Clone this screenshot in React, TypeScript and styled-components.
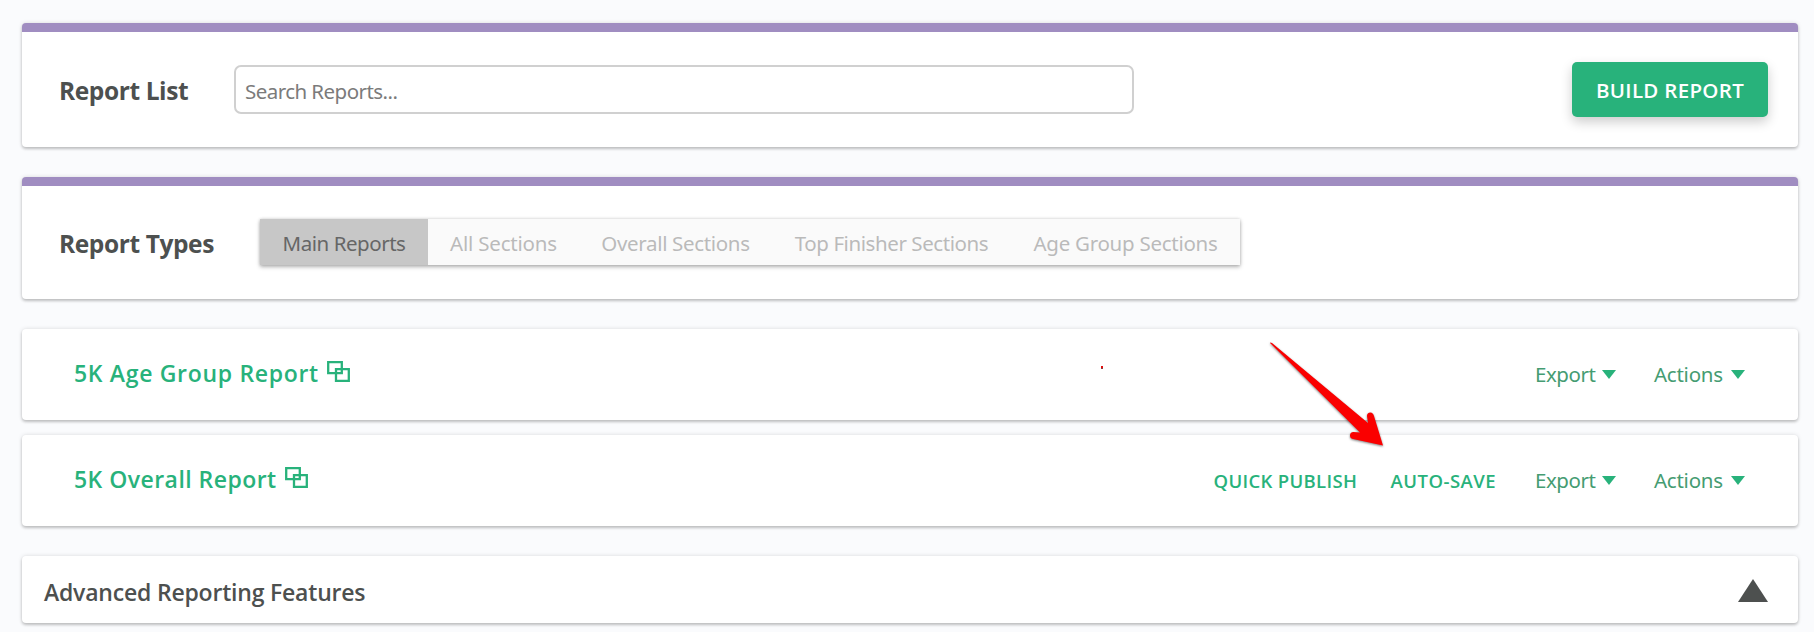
import React from "react";
import styled, { createGlobalStyle } from "styled-components";

const green = "#28b27b";
const ink = "#4d504f";
const bodyFont = '"Noto Sans", "Open Sans", sans-serif';
const headingFont = '"Open Sans", "Noto Sans", sans-serif';

const GlobalStyle = createGlobalStyle`
  * { box-sizing: border-box; }
  body {
    margin: 0;
    background: #fafbfd;
    color: ${ink};
    font-family: ${headingFont};
  }
  button, input { font-family: inherit; margin: 0; }
`;

const Page = styled.main`
  position: relative;
  height: 632px;
  padding: 23px 16px 0 22px;
  overflow: hidden;
`;

const Card = styled.section`
  display: flex;
  align-items: center;
  background: #fff;
  border-radius: 4px;
  box-shadow: 0 2px 3px rgba(0, 0, 0, 0.2), 0 0 4px rgba(0, 0, 0, 0.13);
`;

const HeaderCard = styled(Card)<{ $height: number }>`
  height: ${(p) => p.$height}px;
  margin-bottom: 30px;
  padding: 0 30px 0 37px;
  border-top: 9px solid #a08dc1;
`;

const Title = styled.h2<{ $width: number }>`
  flex: none;
  width: ${(p) => p.$width}px;
  margin: 2px 0 0;
  font-size: 24.5px;
  line-height: 36px;
  font-weight: 700;
  letter-spacing: -0.4px;
  white-space: nowrap;
`;

const SearchInput = styled.input`
  width: 900px;
  height: 49px;
  padding: 3px 9px 0;
  border: 2px solid #d0d0d0;
  border-radius: 7px;
  background: #fff;
  color: ${ink};
  font-family: ${bodyFont};
  font-size: 20.5px;
  letter-spacing: -0.55px;
  outline: none;
  &::placeholder { color: #7b7b7b; opacity: 1; }
`;

const BuildButton = styled.button`
  width: 196px;
  height: 55px;
  margin-left: auto;
  padding: 0;
  border: 0;
  border-radius: 5px;
  background: ${green};
  box-shadow: 0 5px 12px rgba(0, 0, 0, 0.2);
  color: #fff;
  font-size: 20.5px;
  font-weight: 600;
  letter-spacing: 0.3px;
`;

const Tabs = styled.div`
  display: flex;
  height: 46px;
  margin-bottom: 1px;
  background: #fafafa;
  box-shadow: 0 2px 4px rgba(0, 0, 0, 0.28), 0 0 3px rgba(0, 0, 0, 0.16);
`;

const Tab = styled.button<{ $active?: boolean; $width: number; $tracking: number }>`
  width: ${(p) => p.$width}px;
  padding: 2px 0 0;
  border: 0;
  background: ${(p) => (p.$active ? "#c7c7c7" : "transparent")};
  color: ${(p) => (p.$active ? "#666" : "#bababa")};
  font-family: ${bodyFont};
  font-size: 20.5px;
  letter-spacing: ${(p) => p.$tracking}px;
  white-space: nowrap;
`;

const ReportList = styled.div`
  display: flex;
  flex-direction: column;
  gap: 15px;
  margin-bottom: 30px;
`;

const ReportCard = styled(Card)`
  height: 91px;
  padding: 0 52px 0 52px;
`;

const ReportLink = styled.a<{ $tracking: number }>`
  display: flex;
  align-items: center;
  gap: 8px;
  margin-bottom: 4px;
  color: ${green};
  font-size: 23px;
  line-height: 34px;
  font-weight: 600;
  letter-spacing: ${(p) => p.$tracking}px;
  white-space: nowrap;
  svg { display: block; margin-bottom: 2px; }
`;

const RowActions = styled.div`
  display: flex;
  align-items: center;
  margin-left: auto;
`;

const TextButton = styled.button<{ $width: number; $tracking: number }>`
  width: ${(p) => p.$width}px;
  padding: 0;
  border: 0;
  background: none;
  color: ${green};
  font-size: 18.5px;
  line-height: 28px;
  font-weight: 600;
  letter-spacing: ${(p) => p.$tracking}px;
  text-align: left;
  white-space: nowrap;
`;

const MenuButton = styled.button<{ $width: number; $tracking: number }>`
  display: flex;
  align-items: center;
  justify-content: space-between;
  width: ${(p) => p.$width}px;
  margin: 0 0 2px 37px;
  padding: 0 1px 0 0;
  border: 0;
  background: none;
  color: #459c72;
  font-family: ${bodyFont};
  font-size: 20.5px;
  line-height: 30px;
  letter-spacing: ${(p) => p.$tracking}px;
`;

const Caret = styled.span`
  margin-top: 1px;
  border: 7.5px solid transparent;
  border-width: 9px 7.5px 0;
  border-top-color: ${green};
`;

const AdvancedCard = styled(Card)`
  justify-content: space-between;
  height: 67px;
  padding: 0 30px 0 22px;
`;

const AdvancedTitle = styled.h3`
  margin: 5px 0 0;
  font-size: 23px;
  line-height: 34px;
  font-weight: 600;
  letter-spacing: -0.2px;
`;

const CollapseCaret = styled.span`
  margin-top: 2px;
  border: 15px solid transparent;
  border-bottom: 23px solid ${ink};
  border-top: 0;
`;

const Annotation = styled.svg`
  position: absolute;
  left: 1260px;
  top: 330px;
  pointer-events: none;
  filter: drop-shadow(0 1px 1px rgba(0, 0, 0, 0.5));
`;

const RedMark = styled.span`
  position: absolute;
  left: 1101px;
  top: 366px;
  width: 2px;
  height: 3px;
  background: #e00d0d;
  border-bottom: 1px solid #844;
`;

const OverlapIcon = () => (
  <svg width="24" height="21" viewBox="0 0 24 21" fill="none" stroke={green} strokeWidth="2.3">
    <path d="M1.2 1.2H14.800V12.200H1.200ZM9 8.200H21.800V19.800H9Z" />
  </svg>
);

const tabs = [
  { label: "Main Reports", width: 168, tracking: -0.45 },
  { label: "All Sections", width: 151, tracking: -0.2 },
  { label: "Overall Sections", width: 193, tracking: -0.33 },
  { label: "Top Finisher Sections", width: 239, tracking: -0.42 },
  { label: "Age Group Sections", width: 229, tracking: -0.27 },
];

const reports = [
  { name: "5K Age Group Report", tracking: 0.68, publish: false },
  { name: "5K Overall Report", tracking: 0.46, publish: true },
];

export default function App() {
  return (
    <Page>
      <GlobalStyle />
      <HeaderCard $height={124}>
        <Title $width={175}>Report List</Title>
        <SearchInput placeholder="Search Reports..." />
        <BuildButton>BUILD REPORT</BuildButton>
      </HeaderCard>
      <HeaderCard $height={122}>
        <Title $width={201}>Report Types</Title>
        <Tabs>
          {tabs.map((tab, i) => (
            <Tab key={tab.label} $active={i === 0} $width={tab.width} $tracking={tab.tracking}>
              {tab.label}
            </Tab>
          ))}
        </Tabs>
      </HeaderCard>
      <ReportList>
        {reports.map((report) => (
          <ReportCard key={report.name}>
            <ReportLink $tracking={report.tracking}>
              {report.name}
              <OverlapIcon />
            </ReportLink>
            <RowActions>
              {report.publish && (
                <>
                  <TextButton $width={177} $tracking={0.33}>QUICK PUBLISH</TextButton>
                  <TextButton $width={107.5} $tracking={0.5}>AUTO-SAVE</TextButton>
                </>
              )}
              <MenuButton $width={82} $tracking={-0.45}>Export<Caret /></MenuButton>
              <MenuButton $width={92} $tracking={-0.25}>Actions<Caret /></MenuButton>
            </RowActions>
          </ReportCard>
        ))}
      </ReportList>
      <AdvancedCard>
        <AdvancedTitle>Advanced Reporting Features</AdvancedTitle>
        <CollapseCaret />
      </AdvancedCard>
      <RedMark />
      <Annotation width="130" height="120" viewBox="0 0 130 120" fill="#fa0000">
        <path d="M10 13Q10 12 12 13L108 93L107 86Q107 82.500 110.500 82.500Q113 82.500 114 86L123 115.500L93 109Q90 108.500 90 105.500Q90 102 93.500 102L100 102.500Z" />
      </Annotation>
    </Page>
  );
}
